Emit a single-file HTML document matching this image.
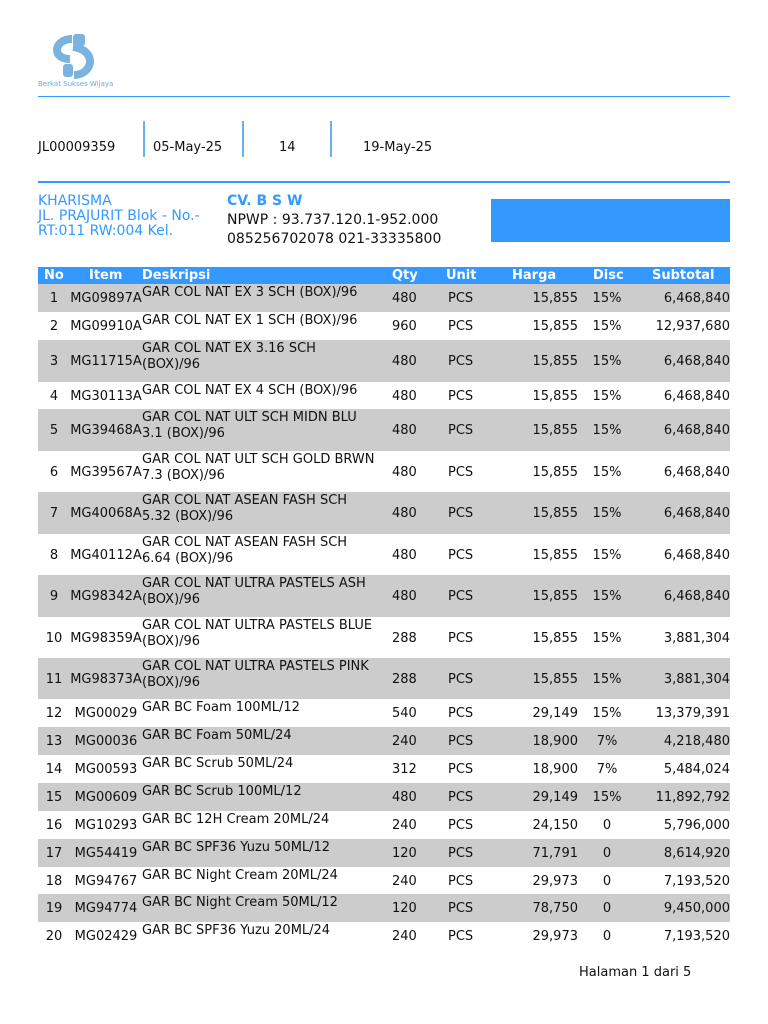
<!DOCTYPE html>
<html><head><meta charset="utf-8"><style>
*{margin:0;padding:0;box-sizing:border-box}
body{width:768px;height:1024px;background:#fff;font-family:"DejaVu Sans","Liberation Sans",sans-serif;color:#111;position:relative;overflow:hidden}
.a{position:absolute;white-space:nowrap}
.t{font-size:13px}
.b{font-size:14px}
.r{position:absolute;left:38px;width:692px;font-size:13px}
.r.g{background:#cccccc}
.r div{position:absolute;top:1px;white-space:nowrap}
.no{left:0;width:32px;text-align:center}
.it{left:32px;width:72px;text-align:center}
.de{left:104px;line-height:16px;top:1px!important}
.q{left:354px}
.u{left:410px}
.h{right:152px;text-align:right}
.d{left:550px;width:38px;text-align:center}
.s{right:0;text-align:right}
.hd div{top:0}
</style></head><body>
<svg class="a" style="left:0;top:0" width="130" height="95" viewBox="0 0 130 95">
<path d="M72 39 C62 39 57 45 57 50 C57 56 63 59 70 59" fill="none" stroke="#7ab3e0" stroke-width="8"/>
<rect x="73" y="34" width="12" height="12" rx="3" fill="#7ab3e0"/>
<path d="M73 47 C84 48 90 55 90 61 C90 69 83 75 74 75" fill="none" stroke="#7ab3e0" stroke-width="8"/>
<rect x="63" y="64" width="10" height="13" rx="3" fill="#7ab3e0"/>
<text x="38" y="86" font-size="7" fill="#6aa6dc" font-family="DejaVu Sans">Berkat Sukses Wijaya</text>
</svg>
<div class="a" style="left:38px;top:96px;width:692px;height:1px;background:#3399ff"></div>
<div class="a t" style="left:38px;top:140px">JL00009359</div>
<div class="a t" style="left:153px;top:140px">05-May-25</div>
<div class="a t" style="left:279px;top:140px">14</div>
<div class="a t" style="left:363px;top:140px">19-May-25</div>
<div class="a" style="left:143px;top:121px;width:2px;height:36px;background:#6ab0f5"></div>
<div class="a" style="left:242px;top:121px;width:2px;height:36px;background:#6ab0f5"></div>
<div class="a" style="left:330px;top:121px;width:2px;height:36px;background:#6ab0f5"></div>
<div class="a" style="left:38px;top:181px;width:692px;height:2px;background:#3399ff"></div>
<div class="a b" style="left:38px;top:194px;color:#3399ff;line-height:15px">KHARISMA<br>JL. PRAJURIT Blok - No.-<br>RT:011 RW:004 Kel.</div>
<div class="a b" style="left:227px;top:193px;color:#3399ff;font-weight:bold">CV. B S W</div>
<div class="a b" style="left:227px;top:211px;line-height:19px">NPWP : 93.737.120.1-952.000<br>085256702078 021-33335800</div>
<div class="a" style="left:491px;top:199px;width:239px;height:43px;background:#3399ff"></div>
<div class="r hd" style="top:267px;height:17px;background:#3399ff;color:#fff;font-weight:bold;font-size:13px;line-height:17px">
<div style="left:6px">No</div><div style="left:51px">Item</div><div style="left:104px">Deskripsi</div><div style="left:354px">Qty</div><div style="left:408px">Unit</div><div style="left:474px">Harga</div><div style="left:555px">Disc</div><div style="left:614px">Subtotal</div></div>

<div class="r g" style="top:284px;height:28px;line-height:28px"><div class="no">1</div><div class="it">MG09897A</div><div class="de">GAR COL NAT EX 3 SCH (BOX)/96</div><div class="q">480</div><div class="u">PCS</div><div class="h">15,855</div><div class="d">15%</div><div class="s">6,468,840</div></div>
<div class="r" style="top:312px;height:28px;line-height:28px"><div class="no">2</div><div class="it">MG09910A</div><div class="de">GAR COL NAT EX 1 SCH (BOX)/96</div><div class="q">960</div><div class="u">PCS</div><div class="h">15,855</div><div class="d">15%</div><div class="s">12,937,680</div></div>
<div class="r g" style="top:340px;height:42px;line-height:42px"><div class="no">3</div><div class="it">MG11715A</div><div class="de">GAR COL NAT EX 3.16 SCH<br>(BOX)/96</div><div class="q">480</div><div class="u">PCS</div><div class="h">15,855</div><div class="d">15%</div><div class="s">6,468,840</div></div>
<div class="r" style="top:382px;height:27px;line-height:27px"><div class="no">4</div><div class="it">MG30113A</div><div class="de">GAR COL NAT EX 4 SCH (BOX)/96</div><div class="q">480</div><div class="u">PCS</div><div class="h">15,855</div><div class="d">15%</div><div class="s">6,468,840</div></div>
<div class="r g" style="top:409px;height:42px;line-height:42px"><div class="no">5</div><div class="it">MG39468A</div><div class="de">GAR COL NAT ULT SCH MIDN BLU<br>3.1 (BOX)/96</div><div class="q">480</div><div class="u">PCS</div><div class="h">15,855</div><div class="d">15%</div><div class="s">6,468,840</div></div>
<div class="r" style="top:451px;height:41px;line-height:41px"><div class="no">6</div><div class="it">MG39567A</div><div class="de">GAR COL NAT ULT SCH GOLD BRWN<br>7.3 (BOX)/96</div><div class="q">480</div><div class="u">PCS</div><div class="h">15,855</div><div class="d">15%</div><div class="s">6,468,840</div></div>
<div class="r g" style="top:492px;height:42px;line-height:42px"><div class="no">7</div><div class="it">MG40068A</div><div class="de">GAR COL NAT ASEAN FASH SCH<br>5.32 (BOX)/96</div><div class="q">480</div><div class="u">PCS</div><div class="h">15,855</div><div class="d">15%</div><div class="s">6,468,840</div></div>
<div class="r" style="top:534px;height:41px;line-height:41px"><div class="no">8</div><div class="it">MG40112A</div><div class="de">GAR COL NAT ASEAN FASH SCH<br>6.64 (BOX)/96</div><div class="q">480</div><div class="u">PCS</div><div class="h">15,855</div><div class="d">15%</div><div class="s">6,468,840</div></div>
<div class="r g" style="top:575px;height:42px;line-height:42px"><div class="no">9</div><div class="it">MG98342A</div><div class="de">GAR COL NAT ULTRA PASTELS ASH<br>(BOX)/96</div><div class="q">480</div><div class="u">PCS</div><div class="h">15,855</div><div class="d">15%</div><div class="s">6,468,840</div></div>
<div class="r" style="top:617px;height:41px;line-height:41px"><div class="no">10</div><div class="it">MG98359A</div><div class="de">GAR COL NAT ULTRA PASTELS BLUE<br>(BOX)/96</div><div class="q">288</div><div class="u">PCS</div><div class="h">15,855</div><div class="d">15%</div><div class="s">3,881,304</div></div>
<div class="r g" style="top:658px;height:41px;line-height:41px"><div class="no">11</div><div class="it">MG98373A</div><div class="de">GAR COL NAT ULTRA PASTELS PINK<br>(BOX)/96</div><div class="q">288</div><div class="u">PCS</div><div class="h">15,855</div><div class="d">15%</div><div class="s">3,881,304</div></div>
<div class="r" style="top:699px;height:28px;line-height:28px"><div class="no">12</div><div class="it">MG00029</div><div class="de">GAR BC Foam 100ML/12</div><div class="q">540</div><div class="u">PCS</div><div class="h">29,149</div><div class="d">15%</div><div class="s">13,379,391</div></div>
<div class="r g" style="top:727px;height:28px;line-height:28px"><div class="no">13</div><div class="it">MG00036</div><div class="de">GAR BC Foam 50ML/24</div><div class="q">240</div><div class="u">PCS</div><div class="h">18,900</div><div class="d">7%</div><div class="s">4,218,480</div></div>
<div class="r" style="top:755px;height:28px;line-height:28px"><div class="no">14</div><div class="it">MG00593</div><div class="de">GAR BC Scrub 50ML/24</div><div class="q">312</div><div class="u">PCS</div><div class="h">18,900</div><div class="d">7%</div><div class="s">5,484,024</div></div>
<div class="r g" style="top:783px;height:28px;line-height:28px"><div class="no">15</div><div class="it">MG00609</div><div class="de">GAR BC Scrub 100ML/12</div><div class="q">480</div><div class="u">PCS</div><div class="h">29,149</div><div class="d">15%</div><div class="s">11,892,792</div></div>
<div class="r" style="top:811px;height:28px;line-height:28px"><div class="no">16</div><div class="it">MG10293</div><div class="de">GAR BC 12H Cream 20ML/24</div><div class="q">240</div><div class="u">PCS</div><div class="h">24,150</div><div class="d">0</div><div class="s">5,796,000</div></div>
<div class="r g" style="top:839px;height:28px;line-height:28px"><div class="no">17</div><div class="it">MG54419</div><div class="de">GAR BC SPF36 Yuzu 50ML/12</div><div class="q">120</div><div class="u">PCS</div><div class="h">71,791</div><div class="d">0</div><div class="s">8,614,920</div></div>
<div class="r" style="top:867px;height:27px;line-height:27px"><div class="no">18</div><div class="it">MG94767</div><div class="de">GAR BC Night Cream 20ML/24</div><div class="q">240</div><div class="u">PCS</div><div class="h">29,973</div><div class="d">0</div><div class="s">7,193,520</div></div>
<div class="r g" style="top:894px;height:28px;line-height:28px"><div class="no">19</div><div class="it">MG94774</div><div class="de">GAR BC Night Cream 50ML/12</div><div class="q">120</div><div class="u">PCS</div><div class="h">78,750</div><div class="d">0</div><div class="s">9,450,000</div></div>
<div class="r" style="top:922px;height:28px;line-height:28px"><div class="no">20</div><div class="it">MG02429</div><div class="de">GAR BC SPF36 Yuzu 20ML/24</div><div class="q">240</div><div class="u">PCS</div><div class="h">29,973</div><div class="d">0</div><div class="s">7,193,520</div></div>

<div class="a t" style="left:579px;top:965px">Halaman 1 dari 5</div>
</body></html>
